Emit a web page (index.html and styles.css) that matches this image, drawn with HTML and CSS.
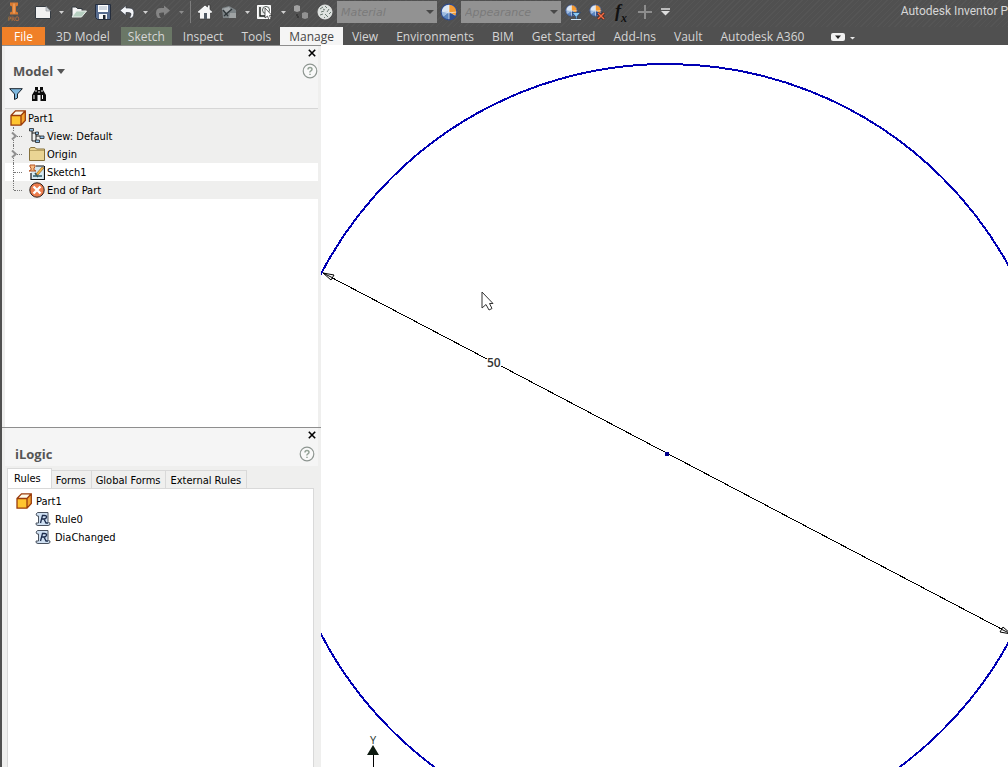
FILE: index.html
```html
<!DOCTYPE html>
<html lang="en">
<head>
    <meta charset="utf-8" />
    <title>Autodesk Inventor</title>
    <link rel="stylesheet" href="styles.css">
</head>
<body>
    <svg class="sprites" aria-hidden="true">
        <symbol id="icon-part" viewBox="0 0 16 16">
            <path d="M1 5.500L5.500 .800H15.300L11 5.500z" fill="#fffbe8" />
            <path d="M11 5.500L15.300 .800V10.500L11 15.200z" fill="#f5a52e" />
            <path d="M1 5.500H11V15.200H1z" fill="#ffc530" />
            <path d="M1 5.500L5.500 .800H15.300V10.500L11 15.200H1zM1 5.500H11V15.200M11 5.500L15.300 .800" fill="none" stroke="#9a3c0c" stroke-width="1.300" />
        </symbol>
        <symbol id="icon-rule" viewBox="0 0 16 16">
            <path d="M2.500 1.500H13V10.500Q13 12 15 12Q15.500 14.500 13 14.500H3Q.500 14.500 1 12H3.500V5H2Q0 3 2.500 1.500z" fill="#cfe0f2" stroke="#4a525f" />
            <path d="M5.500 12L7.500 4.500H9.500Q12 4.500 11.500 6.200T9 8H7M9 8L11 12H13" fill="none" stroke="#1d2c4c" stroke-width="1.300" />
        </symbol>
        <symbol id="icon-help" viewBox="0 0 16 16">
            <circle cx="8" cy="8" r="6.800" fill="#f9f9f9" stroke="#8e9691" stroke-width="1.200" />
            <path d="M6 6.500Q6 4.500 8 4.500T10 6.300Q10 7.300 8.900 7.900T8 9.500M8 10.700V12" fill="none" stroke="#94a296" stroke-width="1.500" />
        </symbol>
        <symbol id="icon-close" viewBox="0 0 8 8">
            <path d="M.800 .800L7.200 7.200M7.200 .800L.800 7.200" stroke="#000" stroke-width="1.600" />
        </symbol>
        <symbol id="icon-caret" viewBox="0 0 5 3">
            <path d="M0 0H5L2.500 3z" fill="currentColor" />
        </symbol>
        <symbol id="icon-ball" viewBox="0 0 16 16">
            <circle cx="8" cy="8" r="7" fill="#dbe7f4" />
            <path d="M8 7V1A7 7 0 0 1 15 8L14 11L8 8z" fill="#f39a32" />
            <path d="M8 8L14 11.500A7 7 0 0 1 8 15L8 8z" fill="#2f4f90" />
            <path d="M8 8V15A7 7 0 0 1 2.500 12.300z" fill="#5b86c0" />
            <path d="M8 8L2.500 12.300A7 7 0 0 1 1 7z" fill="#9dbbe0" />
            <path d="M8 1V15M1 7Q8 10 15 8" fill="none" stroke="#f6f6f6" stroke-width=".6" />
            <circle cx="8" cy="8" r="7" fill="none" stroke="#2e4b8d" />
        </symbol>
        <symbol id="icon-chevron" viewBox="0 0 6 8">
            <path d="M1 .500L4.700 4L1 7.500" fill="none" stroke="#8f8f8f" stroke-width="2" />
        </symbol>
    </svg>

    <header class="app-header">
        <div class="quick-access">
            <button class="app-logo" aria-label="Inventor menu">
                <svg width="12" height="13" viewBox="0 0 12 12"><path d="M2 0H10V3L8 4V9L10 10V12H2V10L4 9V4L2 3z" fill="#d97a31" /><path d="M6 1V11" stroke="#f7b57b" /></svg>
                <span>PRO</span>
            </button>
            <button class="tool" aria-label="New">
                <svg width="16" height="16" viewBox="0 0 16 16"><path d="M.500 2.500H11L15.500 7V14.500H.500z" fill="#f1f1f1" stroke="#343a40" /><path d="M11 2.500V7H15.500z" fill="#cfd3d6" stroke="#8b8f93" stroke-width=".6" /></svg>
            </button>
            <button class="caret" aria-label="New options"><svg width="5" height="3"><use href="#icon-caret" /></svg></button>
            <button class="tool" aria-label="Open">
                <svg width="16" height="16" viewBox="0 0 16 16"><path d="M1 13V3H5L6.500 4.500H11V7" fill="#f4f4f4" stroke="#343a40" /><path d="M1 13L5.500 7H15.500L10.500 13z" fill="#b6cfc0" stroke="#e9efeb" /></svg>
            </button>
            <button class="tool" aria-label="Save">
                <svg width="16" height="16" viewBox="0 0 16 16"><path d="M.500 .500H15.500V15.500H2.500L.500 13.500z" fill="#566b8e" stroke="#262e3d" /><path d="M3 1H13V8H3z" fill="#fff" /><path d="M4 3H12M4 5H12" stroke="#a3b1c2" /><path d="M4 10H12V15H4z" fill="#f6f6f6" /><path d="M8 11H10.500V15H8z" fill="#20252e" /></svg>
            </button>
            <button class="tool" aria-label="Undo">
                <svg width="16" height="16" viewBox="0 0 16 16"><path d="M1 6.500L7 1.500V4H10Q15 4 15 9Q15 12 13 14H10Q12 12 12 10Q12 8.500 9 8.500H7V11.500z" fill="#f3f5f8" stroke="#343a43" stroke-width=".7" /></svg>
            </button>
            <button class="caret" aria-label="Undo options"><svg width="5" height="3"><use href="#icon-caret" /></svg></button>
            <button class="tool" aria-label="Redo" disabled>
                <svg width="16" height="16" viewBox="0 0 16 16"><path d="M15 6.500L9 1.500V4H6Q1 4 1 9Q1 12 3 14H6Q4 12 4 10Q4 8.500 7 8.500H9V11.500z" fill="#858585" /></svg>
            </button>
            <button class="caret caret-dim" aria-label="Redo options"><svg width="5" height="3"><use href="#icon-caret" /></svg></button>
            <span class="separator"></span>
            <button class="tool" aria-label="Home">
                <svg width="16" height="16" viewBox="0 0 16 16"><path d="M0 8L8 1L10.500 3V1H13V5.500L16 8L15 9H13.500V15H2.500V9H1z" fill="#f5f6f7" stroke="#333" stroke-width=".7" /><path d="M7 9H10V15H7z" fill="#4f5964" /></svg>
            </button>
            <button class="tool" aria-label="Update">
                <svg width="16" height="16" viewBox="0 0 16 16"><path d="M1 4L8 2L15 6V14H2z" fill="#7d8487" /><path d="M1 5L8 3L10 6L4 9z" fill="#a3a8aa" /><path d="M2 6L7 12M3 12L11 5" stroke="#30373a" stroke-width="1.400" /><path d="M9 9H15V14H8z" fill="#9fa3a4" /></svg>
            </button>
            <button class="caret" aria-label="Update options"><svg width="5" height="3"><use href="#icon-caret" /></svg></button>
            <button class="tool" aria-label="Select">
                <svg width="16" height="16" viewBox="0 0 16 16"><path d="M.500 1.500H13.500V14.500H.500z" fill="#ededed" stroke="#fff" /><path d="M3 3V12H8" fill="none" stroke="#161b18" stroke-width="1.400" /><circle cx="9" cy="6" r="3.500" fill="#fff" stroke="#525d57" /><path d="M8 4V14L10.500 12L12 16L14 15L12.500 11.500H15z" fill="#fff" stroke="#222" stroke-width=".7" /></svg>
            </button>
            <button class="caret" aria-label="Select options"><svg width="5" height="3"><use href="#icon-caret" /></svg></button>
            <button class="tool" aria-label="Relationships" disabled>
                <svg width="16" height="16" viewBox="0 0 16 16"><path d="M1 2L4 1L7 2V7L4 8L1 7z" fill="#a1a1a1" /><path d="M9 9L12 8L15 9V14L12 15L9 14z" fill="#929292" /><path d="M4 10V13H7" fill="none" stroke="#252525" stroke-dasharray="2 1" /></svg>
            </button>
            <button class="tool" aria-label="Material browser">
                <svg width="16" height="16" viewBox="0 0 16 16"><circle cx="8" cy="8" r="7" fill="#dfe3e0" stroke="#e7eae8" /><path d="M3 5L6 3M8 2L10 4M12 5L10 8M4 8L7 7M3 11L6 10M8 10L11 13M12 10L14 8M7 13L8 14M6 5L8 6" stroke="#6b7a72" /></svg>
            </button>
            <select class="style-select" aria-label="Material"><option>Material</option></select>
            <button class="tool" aria-label="Appearance browser"><svg width="18" height="18"><use href="#icon-ball" /></svg></button>
            <select class="style-select" aria-label="Appearance"><option>Appearance</option></select>
            <button class="tool" aria-label="Adjust appearance">
                <svg width="16" height="16" viewBox="0 0 16 16"><use href="#icon-ball" width="13" height="13" /><path d="M7 8.500H15.500L12 12.500V15H10.500V12.500z" fill="#8bcaf4" stroke="#1f3e67" stroke-width=".7" /><path d="M6 15.500H16" stroke="#cfe6f7" /></svg>
            </button>
            <button class="tool" aria-label="Clear appearance">
                <svg width="16" height="16" viewBox="0 0 16 16"><use href="#icon-ball" width="13" height="13" /><path d="M9 9L15 15M15 9L9 15" stroke="#4a1a10" stroke-width="2.600" /><path d="M9 9L15 15M15 9L9 15" stroke="#f37049" stroke-width="1.500" /></svg>
            </button>
            <button class="tool fx" aria-label="Parameters"><i>f<sub>x</sub></i></button>
            <button class="tool" aria-label="Add">
                <svg width="16" height="16" viewBox="0 0 16 16"><path d="M8 1V15M1 8H15" stroke="#8d8d8d" stroke-width="2" /></svg>
            </button>
            <button class="caret caret-more" aria-label="Customize">
                <svg width="9" height="8" viewBox="0 0 9 8"><path d="M0 1H9" stroke="#dedede" stroke-width="1.500" /><path d="M0 3H9L4.500 7.500z" fill="#dedede" /></svg>
            </button>
            <h1 class="app-title">Autodesk Inventor P</h1>
        </div>
        <nav class="ribbon-tabs">
            <a class="file" href="#">File</a>
            <a href="#">3D Model</a>
            <a class="context" href="#">Sketch</a>
            <a href="#">Inspect</a>
            <a href="#">Tools</a>
            <a class="active" href="#">Manage</a>
            <a href="#">View</a>
            <a href="#">Environments</a>
            <a href="#">BIM</a>
            <a href="#">Get Started</a>
            <a href="#">Add-Ins</a>
            <a href="#">Vault</a>
            <a href="#">Autodesk A360</a>
            <button class="ribbon-toggle" aria-label="Minimize ribbon">
                <svg width="24" height="8" viewBox="0 0 24 8"><rect width="14" height="8" rx="2" fill="#f0f0f0" /><path d="M4 2.500H10L7 6z" fill="#222" /><path d="M19 4H24L21.500 6.500z" fill="#e8e8e8" /></svg>
            </button>
        </nav>
    </header>

    <div class="workspace">
        <aside class="sidebar">
            <section class="panel model-panel">
                <div class="panel-head">
                    <button class="close" aria-label="Close"><svg width="8" height="8"><use href="#icon-close" /></svg></button>
                    <div class="panel-title">
                        <h2>Model <svg width="8" height="5"><use href="#icon-caret" /></svg></h2>
                        <button class="help" aria-label="Help"><svg width="16" height="16"><use href="#icon-help" /></svg></button>
                    </div>
                    <div class="panel-tools">
                        <button aria-label="Filter">
                            <svg width="14" height="12" viewBox="0 0 14 12"><path d="M.700 .700H13.300L8.500 6V10L5.500 11.500V6z" fill="#7eb7dd" stroke="#17202b" /></svg>
                        </button>
                        <button aria-label="Find">
                            <svg width="16" height="14" viewBox="0 0 16 14"><path d="M4 0H7V3H9V0H12V3L15 8V14H9.500V8H6.500V14H1V8L4 3z" fill="#0b0b0b" /><path d="M5 3V5M11 3V5M3 8V12M11.500 8V12M7 5H9" stroke="#f5f5f5" /></svg>
                        </button>
                    </div>
                </div>
                <ul class="tree model-tree">
                    <li class="root"><svg width="16" height="16"><use href="#icon-part" /></svg>Part1</li>
                    <li>
                        <span class="branch"><svg width="6" height="8"><use href="#icon-chevron" /></svg></span>
                        <svg width="16" height="16" viewBox="0 0 16 16"><path d="M3 2V13H6M3 5H7V14M7 8H11" fill="none" stroke="#1d1d1d" /><path d="M.500 .500H4.500V3H.500zM6.500 4H9.500V6.500H6.500zM11 8H15V10.500H11zM6.500 12H10.500V14.500H6.500z" fill="#8fc0ea" stroke="#222" stroke-width=".8" /></svg>View: Default
                    </li>
                    <li>
                        <span class="branch"><svg width="6" height="8"><use href="#icon-chevron" /></svg></span>
                        <svg width="16" height="16" viewBox="0 0 16 16"><path d="M.500 14.500V2.500L2 1.500H6L7.500 3H15.500V14.500z" fill="#ead494" stroke="#85703b" /><path d="M1 4.500H15" stroke="#b9a263" /></svg>Origin
                    </li>
                    <li class="selected">
                        <span class="branch"></span>
                        <svg width="16" height="16" viewBox="0 0 16 16"><path d="M2 2H15.500V15.500H2z" fill="#d6e9f2" /><path d="M15.500 2V15.500H2V9M7 2H15" fill="none" stroke="#111" stroke-width="1.200" /><path d="M4 12H13M6 9L9 13" stroke="#315b66" stroke-width="1.500" /><path d="M7 10L13 3L15 4L9 11z" fill="#f7b744" stroke="#684114" stroke-width=".5" /><path d="M1 1H6V3L5 4V6L7 7H0L2 6V4L1 3z" fill="#f6bd83" stroke="#b65424" /></svg>Sketch1
                    </li>
                    <li class="last">
                        <span class="branch"></span>
                        <svg width="16" height="16" viewBox="0 0 16 16"><circle cx="8" cy="8" r="7.200" fill="#ec7d4e" stroke="#2e211c" /><path d="M4.500 4.500L11.500 11.500M11.500 4.500L4.500 11.500" stroke="#fff" stroke-width="2.400" /></svg>End of Part
                    </li>
                </ul>
            </section>

            <section class="panel ilogic-panel">
                <div class="panel-head">
                    <button class="close" aria-label="Close"><svg width="8" height="8"><use href="#icon-close" /></svg></button>
                    <div class="panel-title">
                        <h2>iLogic</h2>
                        <button class="help" aria-label="Help"><svg width="16" height="16"><use href="#icon-help" /></svg></button>
                    </div>
                </div>
                <div class="rule-tabs">
                    <button class="active">Rules</button>
                    <button>Forms</button>
                    <button>Global Forms</button>
                    <button>External Rules</button>
                </div>
                <ul class="tree rule-tree">
                    <li><svg width="16" height="16"><use href="#icon-part" /></svg>Part1</li>
                    <li class="rule"><svg width="16" height="16"><use href="#icon-rule" /></svg>Rule0</li>
                    <li class="rule"><svg width="16" height="16"><use href="#icon-rule" /></svg>DiaChanged</li>
                </ul>
            </section>
        </aside>

        <main class="canvas">
            <svg class="drawing" width="100%" height="100%">
                <circle cx="346" cy="409" r="390" fill="none" stroke="#0000b4" stroke-width="2" shape-rendering="crispEdges" />
                <!-- diameter dimension -->
                <path d="M2 228L166 314M180 321L690 589" stroke="#000" fill="none" shape-rendering="crispEdges" />
                <path d="M2 228L13 230L10 235zM690 589L679 587L682 582z" fill="#fff" stroke="#000" />
                <path d="M2 228L12 233M690 589L680 584" stroke="#000" />
                <text class="dimension" x="166" y="322">50</text>
                <rect x="344" y="407" width="4" height="4" fill="#00008c" />
                <!-- Y axis of the origin triad -->
                <text class="axis" x="52" y="699" text-anchor="middle">Y</text>
                <path d="M52 700L58 710H46z" fill="#0d1a10" />
                <path d="M52.500 710V722" stroke="#000" />
                <path d="M161 247V263L165 259.500L168 265L171 263.500L168.500 258.500H172z" fill="#fff" stroke="#333" />
            </svg>
        </main>
    </div>
</body>
</html>
```
FILE: styles.css
```css
html, body {
    margin: 0;
    padding: 0;
    height: 100%;
}

body {
    display: flex;
    flex-direction: column;
    overflow: hidden;
    background-color: #fff;
    font-family: "DejaVu Sans Condensed", Tahoma, sans-serif;
    font-size: 11px;
    color: #000;
}

svg {
    display: block;
    flex-shrink: 0;
}

.sprites {
    position: absolute;
    width: 0;
    height: 0;
}

button {
    margin: 0;
    padding: 0;
    border: none;
    background: none;
    font: inherit;
    color: inherit;
}

/* header */
.app-header {
    flex-shrink: 0;
    background-color: #505050;
    color: #d6d6d6;
}

.quick-access {
    display: flex;
    align-items: center;
    height: 24px;
    padding-bottom: 3px;
    overflow: hidden;
    background: repeating-linear-gradient(135deg, #505050 0 3px, #555 3px 4px);
}

.app-logo {
    display: flex;
    flex-direction: column;
    align-items: center;
    width: 31px;
    padding-right: 4px;
    flex-shrink: 0;
    box-sizing: border-box;
    font-size: 6px;
    line-height: 8px;
    color: #d97a31;
}

.tool, .caret {
    display: flex;
    align-items: center;
    justify-content: center;
    flex-shrink: 0;
    width: 24px;
}

.caret {
    width: 12px;
    color: #d0d0d0;
}

.caret-dim {
    color: #8c8c8c;
}

.caret-more {
    width: 16px;
}

.separator {
    flex-shrink: 0;
    width: 1px;
    height: 22px;
    margin: 0 2px 0 3px;
    background-color: #7d7d7d;
}

.style-select {
    flex-shrink: 0;
    width: 100px;
    height: 22px;
    padding: 0 4px;
    border: none;
    border-radius: 0;
    appearance: none;
    background: url("data:image/svg+xml,%3Csvg xmlns='http://www.w3.org/2000/svg' width='8' height='4'%3E%3Cpath d='M0 0H8L4 4z' fill='%23484848'/%3E%3C/svg%3E") no-repeat right 3px center #929292;
    font: italic 11px "DejaVu Sans", Verdana, sans-serif;
    color: #7a7a7a;
}

.fx {
    font: bold 18px "Liberation Serif", serif;
    line-height: 20px;
    color: #111;
}

.fx sub {
    font-size: 12px;
    line-height: 1;
}

.app-title {
    margin: 0 0 2px auto;
    font: 12px Roboto, sans-serif;
    white-space: nowrap;
}

.ribbon-tabs {
    display: flex;
    height: 18px;
    padding-left: 2px;
    font: 12px/20px "Open Sans", sans-serif;
}

.ribbon-tabs a {
    padding: 0 9px;
    color: inherit;
    text-decoration: none;
    white-space: nowrap;
}

.ribbon-tabs .file {
    margin-right: 2px;
    padding: 0 12px;
    background-color: #f08028;
    color: #fff;
}

.ribbon-tabs .context {
    margin: 0 2px;
    padding: 0 7px;
    background-color: #6a7766;
}

.ribbon-tabs .active {
    background-color: #f5f5f5;
    color: #444;
}

.ribbon-toggle {
    margin-left: 18px;
    padding-top: 2px;
}

/* sidebar */
.workspace {
    display: flex;
    flex: 1;
    min-height: 0;
}

.sidebar {
    display: flex;
    flex-direction: column;
    flex: 0 0 321px;
    box-sizing: border-box;
    border-left: 2px solid #505050;
    background-color: #efefee;
}

.panel {
    display: flex;
    flex-direction: column;
    border-top: 1px solid #8e8e8e;
    padding: 0 3px;
}

.model-panel {
    flex: 0 0 381px;
}

.ilogic-panel {
    flex: 1;
}

.panel-head {
    display: flex;
    flex-direction: column;
    background-color: #f5f5f5;
}

.model-panel .panel-head {
    height: 62px;
    border-bottom: 1px solid #d6d6d6;
}

.ilogic-panel .panel-head {
    height: 38px;
}

.close {
    align-self: flex-end;
    padding: 3px 2px;
}

.panel-title {
    display: flex;
    align-items: center;
    justify-content: space-between;
    padding: 3px 0 0 8px;
}

.panel-title h2 {
    display: flex;
    align-items: center;
    gap: 4px;
    margin: 0;
    font: bold 13px/16px "Open Sans", sans-serif;
    color: #555;
}

.ilogic-panel .panel-title {
    padding: 4px 3px 0 10px;
}

.panel-tools {
    display: flex;
    align-items: center;
    gap: 8px;
    padding: 8px 4px;
}

.tree {
    margin: 0;
    padding: 0;
    list-style: none;
    background-color: #fff;
}

.tree li {
    display: flex;
    align-items: center;
    gap: 2px;
    height: 18px;
    white-space: nowrap;
}

.model-tree {
    flex: 1;
}

.model-tree li {
    padding-left: 6px;
    background-color: #efefee;
}

.model-tree li.root {
    padding-left: 5px;
}

.model-tree li.selected {
    background-color: #fff;
}

/* dotted connector lines */
.branch {
    position: relative;
    width: 16px;
    height: 18px;
}

.branch::before {
    content: "";
    position: absolute;
    left: 2px;
    top: 0;
    bottom: 0;
    border-left: 1px dotted #777;
}

.last .branch::before {
    bottom: 9px;
}

.branch::after {
    content: "";
    position: absolute;
    left: 3px;
    right: 5px;
    top: 9px;
    border-top: 1px dotted #777;
}

.branch svg {
    position: absolute;
    left: 0;
    top: 5px;
    z-index: 1;
    background-color: #efefee;
}

.rule-tabs {
    display: flex;
    align-items: flex-end;
    height: 21px;
    padding: 1px 0 0 2px;
}

.rule-tabs button {
    height: 18px;
    padding: 2px 5px 0 4px;
    border: 1px solid #d9d9d9;
    border-left: none;
    border-bottom: none;
    white-space: nowrap;
}

.rule-tabs .active {
    height: 20px;
    padding: 0 10px 1px 6px;
    border-left: 1px solid #d9d9d9;
    background-color: #fff;
}

.rule-tree {
    flex: 1;
    margin: 0 4px 0 2px;
    padding: 3px 0 0 8px;
    border: 1px solid #d9d9d9;
    border-width: 1px 1px 0;
}

.rule-tree li {
    gap: 4px;
}

.rule-tree .rule {
    padding-left: 19px;
}

/* drawing area */
.canvas {
    flex: 1;
    min-width: 0;
    overflow: hidden;
}

.dimension {
    font: 600 12px "Open Sans", sans-serif;
    fill: #333;
}

.axis {
    font: 11px "Open Sans", sans-serif;
    fill: #26332b;
}
```
